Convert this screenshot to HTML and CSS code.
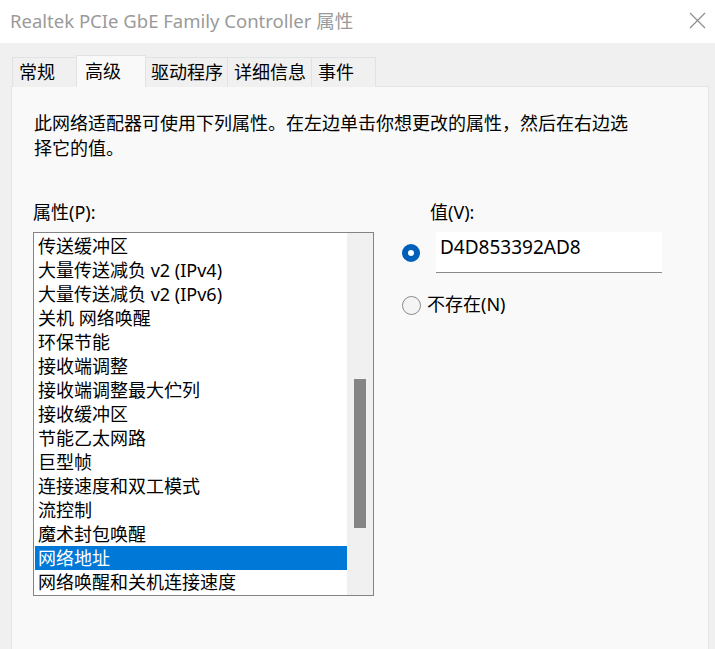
FILE: index.html
```html
<!DOCTYPE html>
<html lang="zh-CN">
<head>
<meta charset="utf-8">
<title>Realtek PCIe GbE Family Controller 属性</title>
<link rel="stylesheet" href="styles.css">
</head>
<body>
<div class="window">
  <div class="titlebar">
    <span class="title">Realtek PCIe GbE Family Controller 属性</span>
    <svg class="close" width="17" height="17" viewBox="0 0 17 17"><path d="M1 1 L16 16 M16 1 L1 16" stroke="#8c8c8c" stroke-width="1.2" fill="none"/></svg>
  </div>
  <div class="content">
    <div class="tabs">
      <div class="tab t1">常规</div>
      <div class="tab t2 active">高级</div>
      <div class="tab t3">驱动程序</div>
      <div class="tab t4">详细信息</div>
      <div class="tab t5">事件</div>
    </div>
    <div class="panel">
      <p class="desc">此网络适配器可使用下列属性。在左边单击你想更改的属性，然后在右边选<br>择它的值。</p>
      <div class="columns">
        <div class="left">
          <div class="label">属性(P):</div>
          <div class="listbox">
            <ul class="items">
              <li>传送缓冲区</li>
              <li>大量传送减负 v2 (IPv4)</li>
              <li>大量传送减负 v2 (IPv6)</li>
              <li>关机 网络唤醒</li>
              <li>环保节能</li>
              <li>接收端调整</li>
              <li>接收端调整最大伫列</li>
              <li>接收缓冲区</li>
              <li>节能乙太网路</li>
              <li>巨型帧</li>
              <li>连接速度和双工模式</li>
              <li>流控制</li>
              <li>魔术封包唤醒</li>
              <li class="selected">网络地址</li>
              <li>网络唤醒和关机连接速度</li>
            </ul>
            <div class="scrollbar"><div class="thumb"></div></div>
          </div>
        </div>
        <div class="right">
          <div class="label vlabel">值(V):</div>
          <div class="row first">
            <span class="radio checked"></span>
            <div class="input">D4D853392AD8</div>
          </div>
          <div class="row second">
            <span class="radio"></span>
            <span class="rtext">不存在(N)</span>
          </div>
        </div>
      </div>
    </div>
  </div>
</div>
</body>
</html>
```

FILE: styles.css
```css
* { box-sizing: border-box; }
html, body { margin: 0; padding: 0; }
body {
  width: 715px;
  height: 649px;
  overflow: hidden;
  background: #f0f0f0;
  font-family: "Noto Sans", "Noto Sans CJK SC", sans-serif;
  color: #000;
}
.window { display: flex; flex-direction: column; height: 649px; }
.titlebar {
  height: 43px;
  background: #fff;
  display: flex;
  align-items: center;
  justify-content: space-between;
  padding: 0 10px 0 10px;
  flex: none;
}
.title {
  font-size: 18.5px;
  color: #9a9a9a;
  line-height: 24px;
  margin-top: -2px;
}
.close { margin-top: -2px; margin-right: -1px; }
.content {
  flex: 1;
  display: flex;
  flex-direction: column;
  padding: 12px 6px 0 11px;
}
.tabs {
  display: flex;
  align-items: flex-end;
  height: 32px;
  padding-left: 1px;
  margin-bottom: -1px;
  position: relative;
  z-index: 1;
}
.tab {
  height: 30px;
  font-size: 18px;
  line-height: 28px;
  padding-left: 6px;
  border: 1px solid #e2e2e2;
  border-bottom: none;
  background: #f0f0f0;
  white-space: nowrap;
  margin-left: -1px;
}
.tab.t1 { width: 65px; margin-left: 0; }
.tab.t2 { width: 70px; }
.tab.t3 { width: 83px; padding-left: 5px; }
.tab.t4 { width: 85px; }
.tab.t5 { width: 65px; }
.tab.active {
  height: 32px;
  background: #f9f9f9;
  line-height: 30px;
  padding-left: 8px;
  border-bottom: 1px solid #f9f9f9;
}
.panel {
  flex: 1;
  background: #f9f9f9;
  border: 1px solid #e5e5e5;
  border-bottom: none;
  padding: 24px 0 0 21px;
}
.desc {
  margin: 0 0 0 1px;
  font-size: 18px;
  line-height: 25px;
}
.columns {
  display: flex;
  margin-top: 39px;
}
.label {
  font-size: 18px;
  line-height: 24px;
  margin-bottom: 8px;
}
.left { width: 341px; }
.listbox {
  width: 341px;
  height: 364px;
  border: 1px solid #848484;
  padding: 1px 0 1px 1px;
  background: #fff;
  display: flex;
}
.items {
  list-style: none;
  margin: 0;
  padding: 0;
  flex: 1;
  overflow: hidden;
}
.items li {
  height: 24px;
  line-height: 24px;
  font-size: 18px;
  padding-left: 3px;
  white-space: nowrap;
}
.items li.selected { background: #0078d7; color: #fff; }
.scrollbar {
  width: 26px;
  margin-top: -1px;
  margin-bottom: -1px;
  background: #f0f0f0;
  padding: 146px 0 0 7px;
  flex: none;
}
.thumb { width: 12px; height: 149px; background: #858585; }
.right { margin-left: 28px; }
.vlabel { margin-left: 28px; }
.row { display: flex; align-items: center; }
.row.first { height: 41px; margin-top: 1px; }
.row.second { margin-top: 22px; }
.radio {
  width: 19px;
  height: 19px;
  border-radius: 50%;
  border: 1px solid #8a8a8a;
  background: #f4f4f4;
  flex: none;
}
.radio.checked {
  border: 6px solid #005fb8;
  background: #fff;
  width: 18px;
  height: 18px;
  margin-left: 0;
  margin-top: 1px;
}
.input {
  margin-left: 16px;
  width: 226px;
  height: 41px;
  background: #fff;
  border-bottom: 1px solid #8a8a8a;
  font-size: 19px;
  line-height: 24px;
  padding: 3px 0 0 4px;
  align-self: flex-start;
}
.rtext { font-size: 18px; line-height: 24px; margin-left: 6px; margin-top: -3px; }
```
